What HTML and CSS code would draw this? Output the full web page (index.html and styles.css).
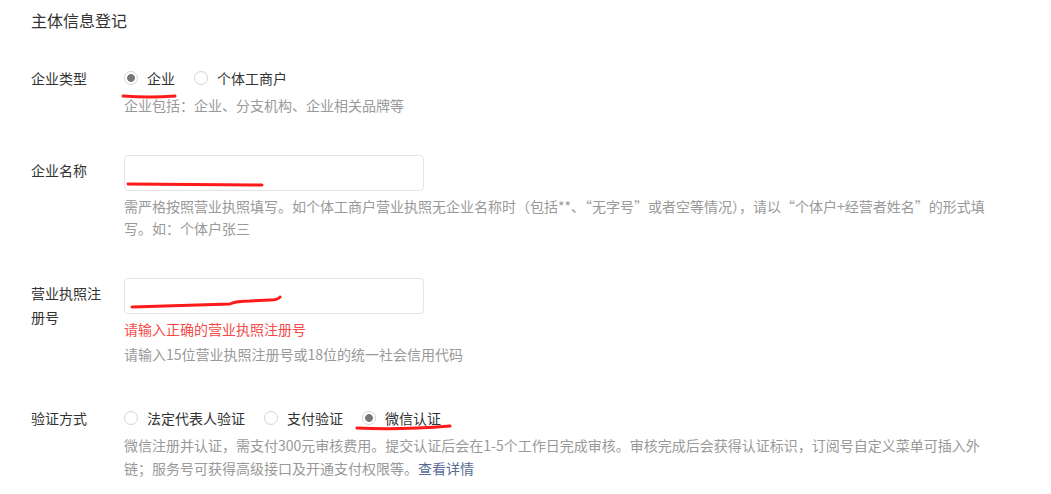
FILE: index.html
```html
<!DOCTYPE html>
<html lang="zh-CN">
  <head>
    <meta charset="UTF-8" />
    <meta name="viewport" content="width=device-width, initial-scale=1.0" />
    <title>主体信息登记</title>
    <link rel="stylesheet" href="styles.css">
  </head>
  <body>
    <div class="page">
      <h2 class="title">主体信息登记</h2>

      <form id="subjectForm">
        <div class="row">
          <label class="row-label">企业类型</label>
          <div class="row-body">
            <div class="radio-group">
              <label class="radio"><input type="radio" name="type" value="company" checked /><span>企业</span></label>
              <label class="radio"><input type="radio" name="type" value="individual" /><span>个体工商户</span></label>
            </div>
            <p class="tips">企业包括：企业、分支机构、企业相关品牌等</p>
          </div>
        </div>

        <div class="row">
          <label class="row-label" for="companyName">企业名称</label>
          <div class="row-body">
            <input type="text" class="text-input" id="companyName" name="company_name" />
            <p class="tips">需严格按照营业执照填写。如个体工商户营业执照无企业名称时（包括**、“无字号”或者空等情况），请以“个体户+经营者姓名”的形式填写。如：个体户张三</p>
          </div>
        </div>

        <div class="row row-wide">
          <label class="row-label" for="licenseNo">营业执照注册号</label>
          <div class="row-body">
            <input type="text" class="text-input" id="licenseNo" name="license_no" />
            <p class="error">请输入正确的营业执照注册号</p>
            <p class="tips tips-gap">请输入15位营业执照注册号或18位的统一社会信用代码</p>
          </div>
        </div>

        <div class="row">
          <label class="row-label">验证方式</label>
          <div class="row-body">
            <div class="radio-group">
              <label class="radio"><input type="radio" name="verify" value="legal" /><span>法定代表人验证</span></label>
              <label class="radio"><input type="radio" name="verify" value="pay" /><span>支付验证</span></label>
              <label class="radio"><input type="radio" name="verify" value="wechat" checked /><span>微信认证</span></label>
            </div>
            <p class="tips">微信注册并认证，需支付300元审核费用。提交认证后会在1-5个工作日完成审核。审核完成后会获得认证标识，订阅号自定义菜单可插入外链；服务号可获得高级接口及开通支付权限等。<a href="#" class="link">查看详情</a></p>
          </div>
        </div>
      </form>

      <!-- hand drawn marks on the screenshot -->
      <svg class="marks" width="1051" height="494" viewBox="0 0 1051 494">
        <path d="M123 96 Q150 98 175 96" />
        <path d="M128 184 L262 185" />
        <path d="M132 307 L230 304 Q236 301 250 301 L270 300 Q278 300 280 297" />
        <path d="M357 428 Q400 430 450 426" />
      </svg>
    </div>
  </body>
</html>
```

FILE: styles.css
```css
body {
  margin: 0;
  background-color: #ffffff;
  font-family: "Noto Sans CJK SC", "Microsoft YaHei", sans-serif;
  font-size: 14px;
  color: #333;
}

.page {
  position: relative;
  padding: 8px 0 0 31px;
  height: 486px;
  overflow: hidden;
}

.title {
  margin: 0 0 34px;
  font-size: 16px;
  font-weight: normal;
  line-height: 24px;
  color: #333;
}

.row {
  display: flex;
  margin-bottom: 38px;
}

.row-wide {
  margin-bottom: 41px;
}

.row-label {
  width: 76px;
  margin-right: 17px;
  padding-top: 3px;
  line-height: 24px;
  color: #333;
  flex-shrink: 0;
}

.row:first-child .row-label,
.row:last-child .row-label {
  padding-top: 0;
}

.row-body {
  width: 864px;
}

.radio-group {
  display: flex;
  align-items: center;
  height: 24px;
}

.radio {
  display: flex;
  align-items: center;
  margin-right: 19px;
  cursor: pointer;
}

.radio input {
  appearance: none;
  -webkit-appearance: none;
  width: 14px;
  height: 14px;
  margin: 0 9px 0 0;
  border: 1px solid #d4d4d4;
  border-radius: 50%;
  box-sizing: border-box;
  background-color: #fff;
}

.radio input:checked {
  background: radial-gradient(circle, #777 0, #777 3.5px, #fff 4.3px);
}

.tips {
  margin: 4px 0 0;
  line-height: 22.5px;
  color: #999;
}

.tips-gap {
  margin-top: 3px;
}

.error {
  margin: 4px 0 0;
  line-height: 22px;
  color: #f44a4a;
}

.link {
  color: #576b95;
  text-decoration: none;
}

.text-input {
  display: block;
  width: 300px;
  height: 36px;
  padding: 0 10px;
  border: 1px solid #e4e4e4;
  border-radius: 4px;
  box-sizing: border-box;
  font-size: 14px;
  outline: none;
}

.marks {
  position: absolute;
  left: 0;
  top: 0;
  pointer-events: none;
}

.marks path {
  fill: none;
  stroke: #ff1a1a;
  stroke-width: 3;
  stroke-linecap: round;
  stroke-linejoin: round;
}
```
